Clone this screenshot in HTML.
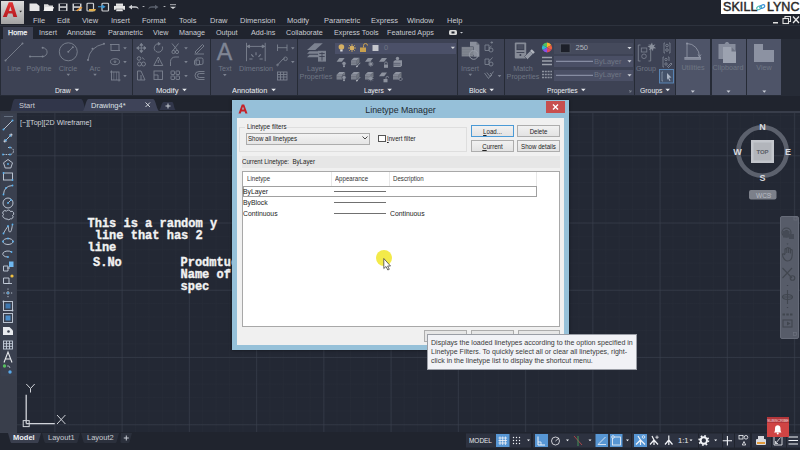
<!DOCTYPE html>
<html><head><meta charset="utf-8">
<style>
*{margin:0;padding:0;box-sizing:border-box}
html,body{width:800px;height:450px;overflow:hidden;background:#222733;font-family:"Liberation Sans",sans-serif}
.a{position:absolute}
svg{overflow:visible}
#top{left:0;top:0;width:800px;height:25px;background:#1f232d}
#tabs{left:0;top:26px;width:800px;height:13px;background:#20242e}
#ribbon{left:0;top:39px;width:800px;height:57px;background:#262b36}
.pnl{position:absolute;top:0;height:56px;background:#3d4254}
.pl{position:absolute;top:46.5px;font-size:7.5px;line-height:9px;color:#eceef2;white-space:nowrap}
.il{position:absolute;font-size:7.2px;line-height:8px;color:#6f7684;white-space:nowrap;text-align:center}
.mi{position:absolute;top:16px;font-size:7.5px;line-height:9px;color:#c9ccd2;white-space:nowrap}
.ti{position:absolute;font-size:7.2px;line-height:9px;color:#c9ccd2;white-space:nowrap}
#ftabs{left:0;top:96px;width:800px;height:17px;background:#20242e}
#draw{left:0;top:113px;width:800px;height:319px;background:#232834;overflow:hidden}
#status{left:0;top:432px;width:800px;height:18px;background:#232834}
</style></head><body>
<!-- TOP BAR -->
<div class="a" id="top">
  <div class="a" style="left:1px;top:1px;width:23px;height:22.5px;background:linear-gradient(#dcdcdc,#b9b9b9 60%,#a3a3a3)"></div>
  <svg class="a" style="left:0;top:0" width="25" height="24" viewBox="0 0 25 24">
    <defs><linearGradient id="lg" x1="0" y1="0" x2="0" y2="1"><stop offset="0" stop-color="#e03434"/><stop offset="1" stop-color="#b81c22"/></linearGradient></defs>
    <path d="M2.8 17 L8.8 2.3 L12.6 2.3 L17.2 17 L13.4 17 L12.4 13.6 L8.1 13.6 L6.8 17 Z M8.9 11 L11.7 11 L10.4 6.6 Z" fill="url(#lg)"/>
    <path d="M19.3 10.8 H22 L20.65 12.4 Z" fill="#2a2a2a"/>
  </svg>
  <!-- QAT icons -->
  <svg class="a" style="left:28px;top:1px" width="150" height="13" viewBox="0 0 150 13"><g transform="translate(0 1) scale(1 0.78)">
    <path d="M1.5 2 H8.5 L11.5 5 V11.5 H1.5 Z" fill="#e6e6e6"/>
    <path d="M16 3 H20 L21 4.5 H25 V11.5 H16 Z" fill="#d9d9d9"/><path d="M17 6.5 H26 L24.5 11.5 H15.5 Z" fill="#f0f0f0"/>
    <rect x="30.5" y="2" width="9" height="9.5" fill="#cfd1d4"/><rect x="32" y="2.5" width="6" height="3" fill="#1f232d"/><rect x="32" y="7.5" width="6" height="3.5" fill="#1f232d"/>
    <rect x="44.5" y="2" width="9" height="9.5" fill="#cfd1d4"/><rect x="46" y="2.5" width="6" height="3" fill="#1f232d"/><rect x="46" y="7.5" width="5" height="3.5" fill="#1f232d"/><path d="M48 11 L53 6 L54.5 7.5 L49.5 12 Z" fill="#e89a3c"/>
    <rect x="59" y="1.5" width="6.5" height="10" rx="1" fill="none" stroke="#cfd1d4" stroke-width="1.2"/><path d="M61 9 H68 L67 12 H61 Z" fill="#e0b050"/>
    <rect x="74" y="1.5" width="6.5" height="10" rx="1" fill="none" stroke="#cfd1d4" stroke-width="1.2"/><path d="M70 6 H76 M74 4 L76.5 6 L74 8" stroke="#3a9ad9" stroke-width="1.4" fill="none"/>
    <rect x="86" y="5" width="11" height="5" fill="#e6e6e6"/><rect x="88" y="2" width="7" height="3" fill="#e6e6e6"/><rect x="88" y="9" width="7" height="3" fill="#e6e6e6" stroke="#1f232d" stroke-width="0.5"/>
    <path d="M100.5 6.5 L104 3.5 V5.5 H107 C109.5 5.5 110.5 7 110.5 9.5 C109.5 8 108.5 7.5 107 7.5 H104 V9.5 Z" fill="#cfd1d4"/>
    <path d="M114 5 L117 5 L115.5 6.5 Z" fill="#cfd1d4"/>
    <path d="M130.5 6.5 L127 3.5 V5.5 H124 C121.5 5.5 120.5 7 120.5 9.5 C121.5 8 122.5 7.5 124 7.5 H127 V9.5 Z" fill="#5a606c"/>
    <path d="M135 5 L138 5 L136.5 6.5 Z" fill="#cfd1d4"/>
    <rect x="142" y="3" width="6" height="1" fill="#cfd1d4"/><path d="M142 6 L148 6 L145 9 Z" fill="#cfd1d4"/>
  </g></svg>
  <div class="mi" style="left:33px">File</div>
  <div class="mi" style="left:57px">Edit</div>
  <div class="mi" style="left:82px">View</div>
  <div class="mi" style="left:111px">Insert</div>
  <div class="mi" style="left:142px">Format</div>
  <div class="mi" style="left:179px">Tools</div>
  <div class="mi" style="left:210px">Draw</div>
  <div class="mi" style="left:240px">Dimension</div>
  <div class="mi" style="left:287px">Modify</div>
  <div class="mi" style="left:324px">Parametric</div>
  <div class="mi" style="left:371px">Express</div>
  <div class="mi" style="left:407px">Window</div>
  <div class="mi" style="left:447px">Help</div>
  <!-- watermark -->
  <div class="a" style="left:721px;top:0;width:79px;height:14px;background:#fff"></div>
  <div class="a" style="left:723px;top:0px;font-size:12.5px;line-height:14px;color:#2a2a2a;letter-spacing:0.1px;-webkit-text-stroke:0.45px #2a2a2a">SKILL</div>
  <svg class="a" style="left:755px;top:3px" width="12" height="8" viewBox="0 0 12 8"><ellipse cx="4.2" cy="4.8" rx="2.6" ry="1.6" fill="none" stroke="#4ec0b0" stroke-width="1.1" transform="rotate(-25 4.2 4.8)"/><ellipse cx="7.3" cy="3.6" rx="2.6" ry="1.6" fill="none" stroke="#3a8fd8" stroke-width="1.1" transform="rotate(-25 7.3 3.6)"/></svg>
  <div class="a" style="left:767px;top:0px;font-size:12.5px;line-height:14px;color:#2a2a2a;-webkit-text-stroke:0.45px #2a2a2a">LYNC</div>
  <!-- window controls -->
  <svg class="a" style="left:771px;top:15px" width="29" height="10" viewBox="0 0 29 10">
    <rect x="2" y="7" width="5" height="1.5" fill="#e0e0e0"/>
    <rect x="12" y="3.5" width="5.5" height="5" fill="none" stroke="#e0e0e0" stroke-width="1.1"/><path d="M14 3.5 V1.5 H19.5 V6.5 H17.5" fill="none" stroke="#e0e0e0" stroke-width="1.1"/>
    <path d="M22 1.5 L28 8 M28 1.5 L22 8" stroke="#e8e8e8" stroke-width="1.3"/>
  </svg>
</div>
<div class="a" style="left:0;top:25px;width:800px;height:1px;background:#2d323d"></div>
<!-- RIBBON TABS -->
<div class="a" id="tabs">
  <div class="a" style="left:3px;top:1px;width:30px;height:12px;background:#3d4254"></div>
  <div class="ti" style="left:8px;top:2px;color:#f0f2f5;-webkit-text-stroke:0.25px #f0f2f5">Home</div>
  <div class="ti" style="left:39px;top:2px">Insert</div>
  <div class="ti" style="left:67px;top:2px">Annotate</div>
  <div class="ti" style="left:108px;top:2px">Parametric</div>
  <div class="ti" style="left:153px;top:2px">View</div>
  <div class="ti" style="left:179px;top:2px">Manage</div>
  <div class="ti" style="left:216px;top:2px">Output</div>
  <div class="ti" style="left:251px;top:2px">Add-ins</div>
  <div class="ti" style="left:286px;top:2px">Collaborate</div>
  <div class="ti" style="left:334px;top:2px">Express Tools</div>
  <div class="ti" style="left:387px;top:2px">Featured Apps</div>
  <svg class="a" style="left:449px;top:4px" width="16" height="6" viewBox="0 0 16 6"><rect x="0" y="0" width="8" height="5" rx="1.5" fill="#d8d8d8"/><rect x="2.5" y="1.5" width="3" height="2" fill="#1f232d"/><path d="M11 2 L14 2 L12.5 3.5 Z" fill="#c9ccd2"/></svg>
</div>
<!-- RIBBON -->
<div class="a" id="ribbon">
  <div class="pnl" style="left:1px;width:131px"></div>
  <div class="pnl" style="left:133px;width:77px"></div>
  <div class="pnl" style="left:211px;width:86px"></div>
  <div class="pnl" style="left:298px;width:159px"></div>
  <div class="pnl" style="left:458px;width:46px"></div>
  <div class="pnl" style="left:505px;width:129px"></div>
  <div class="pnl" style="left:635px;width:40px"></div>
  <div class="pnl" style="left:676px;width:34px;background:#4e5468"></div>
  <div class="pnl" style="left:712px;width:34px;background:#4e5468"></div>
  <div class="pnl" style="left:747px;width:34px;background:#4e5468"></div>
  <!-- dropdown boxes -->
  <div class="a" style="left:335px;top:3.5px;width:121px;height:11px;background:#4b5068"></div>
  <div class="a" style="left:553.5px;top:3.5px;width:79.5px;height:11px;background:#454a5c"></div>
  <div class="a" style="left:553.5px;top:16.5px;width:79.5px;height:11.4px;background:#4a4f65"></div>
  <div class="a" style="left:553.5px;top:30.9px;width:79.5px;height:11px;background:#4a4f65"></div>
  <svg class="a" style="left:0;top:0" width="800" height="57" viewBox="0 0 800 57">
    <g fill="none" stroke="#7c8290" stroke-width="0.9">
      <!-- Draw: line -->
      <path d="M5.5 21.5 L22.5 4.5"/>
      <!-- polyline -->
      <path d="M30 17.6 H42.6 A4.5 4.45 0 0 0 42.6 8.7"/>
      <!-- circle -->
      <circle cx="68.3" cy="12.8" r="9"/><path d="M68.3 12.8 L72.8 8.3"/>
      <!-- arc -->
      <path d="M88 21 Q89.5 8 104 4.8"/>
      <!-- small draw icons -->
      <rect x="111" y="5.5" width="8" height="6"/><path d="M110 5.5 H111 M119 11.5 H120"/>
      <ellipse cx="115" cy="22.7" rx="4.5" ry="3"/><circle cx="115" cy="22.7" r="0.9"/>
      <rect x="111.5" y="33" width="7.5" height="8"/><path d="M110 33 H111.5 M119 41 H120.5 M111.5 31.5 V33 M119 41 V42.5" /><path d="M113.8 33 V41 M116.5 33 V41" stroke-width="0.5"/>
      <!-- modify icons -->
      <path d="M141.3 5.5 V12.5 M137.8 9 H144.8"/><path d="M139.8 6.3 L141.3 4.3 L142.8 6.3 Z M139.8 11.7 L141.3 13.7 L142.8 11.7 Z M138.6 7.5 L136.6 9 L138.6 10.5 Z M144 7.5 L146 9 L144 10.5 Z" fill="#7c8290"/>
      <path d="M158.3 4.8 A4.2 4.2 0 1 0 162.3 7.5"/><path d="M158.3 3.5 L160.3 4.8 L158.3 6.1 Z" fill="#7c8290"/>
      <path d="M172 4.5 L178 12 M178.5 4.5 L172.5 12"/><circle cx="173.5" cy="13" r="1.6"/><circle cx="177" cy="13" r="1.6"/>
      <path d="M195 13 L202.5 5.5 L204 7 L196.5 14.5 Z M194.5 15 H204"/>
      <circle cx="139" cy="19.5" r="1.8"/><circle cx="139.5" cy="25" r="2"/><circle cx="143.5" cy="25" r="2"/><path d="M142 18.5 L144.5 20.5"/>
      <path d="M158.3 18 L153.8 26.5 H162.8 Z M158.3 21 V24"/>
      <path d="M170.5 27 V22.5 A4.5 4.5 0 0 1 175 18 H179"/>
      <rect x="196" y="19" width="7" height="6.5" rx="1.5"/><rect x="194.5" y="21" width="5" height="5" rx="1"/>
      <path d="M137.5 32 V41 H145 L141 32 Z M141 36 V41"/>
      <rect x="154" y="32" width="8.5" height="8.5"/><path d="M154 36 H158 V40.5"/>
      <rect x="171" y="32" width="3.5" height="3.5" rx="0.5"/><rect x="176" y="32" width="3.5" height="3.5" rx="0.5"/><rect x="171" y="37" width="3.5" height="3.5" rx="0.5"/><rect x="176" y="37" width="3.5" height="3.5" rx="0.5"/>
      <path d="M204.5 32.5 H199 A4 4 0 0 0 199 40.5 H204.5 M204.5 34.5 H199.5 A2 2 0 0 0 199.5 38.5 H204.5"/>
      <!-- annotation -->
      
      <path d="M246.5 3.8 V22.2 M265.2 3.8 V22.2 M247 7.4 H264.7"/><path d="M247 7.4 L249.5 6 V8.8 Z M264.7 7.4 L262.2 6 V8.8 Z" fill="#7c8290"/>
      <path d="M251.3 15.3 L253.5 17.8 M256 13.2 V16.2 M260.7 15.3 L258.5 17.8 M249.3 20 H252.5 M259.5 20 H262.7" stroke-width="1.1"/>
      <path d="M277.5 5.5 V12 M287 5.5 V12 M277.5 8.7 H287"/>
      <path d="M277.5 26 L283 20 M283 20 L284.5 19.5" /><circle cx="285.5" cy="19.8" r="1.8"/><circle cx="277.5" cy="26" r="0.8"/>
      <rect x="277.5" y="33" width="9.5" height="8"/><path d="M277.5 35.5 H287 M277.5 38 H287 M280.5 33 V41 M283.7 33 V41"/>
      <!-- block small -->
      <path d="M485 6 H489 V11.5 H485 Z M489 9 L491.5 7" /><circle cx="491" cy="11" r="2"/><path d="M490.5 3.5 H493 M491.8 2.3 V4.7"/>
      <path d="M485 20 H489 V25.5 H485 Z"/><circle cx="491" cy="25" r="2"/><path d="M488.5 23 L492.5 18.5"/>
      <path d="M484.5 34 L488.5 39.5 L493.5 32.5 M486.8 33.5 L490 37.5 M490 34 L492 36 L490 38"/>
      <!-- groups small -->
      <path d="M665 4 H664 V14 H665 M669 4 H670 V14 H669"/><circle cx="667" cy="6.5" r="1.3"/><circle cx="667" cy="11" r="1.3"/>
      <path d="M664 18 H663 V28 H664 M668 18 H669 V22"/><circle cx="666" cy="20.5" r="1.2"/><circle cx="666" cy="25" r="1.2"/><path d="M667 28 L671 24 L672 25 L668 29"/>
      <!-- utilities -->
      <path d="M687 4.5 V18 M687 4.5 A12.5 13.5 0 0 1 699.5 18" stroke="#8e94a4" stroke-width="0.9"/>
      <circle cx="687" cy="4.5" r="1" fill="#8e94a4" stroke="none"/><path d="M698 15.5 L699.5 18 L701 15.5" stroke="#8e94a4" stroke-width="0.8"/>
      <rect x="684.4" y="18" width="16.6" height="2.8" fill="#8e94a4" stroke="none"/><path d="M685.5 19.4 H700" stroke="#6e7484" stroke-width="0.6" stroke-dasharray="1 1"/>
    </g>
    <g fill="#7c8290">
      <circle cx="5.5" cy="21.5" r="1"/><circle cx="22.5" cy="4.5" r="1"/>
      <circle cx="30" cy="17.6" r="1"/><circle cx="42.6" cy="17.6" r="1"/><circle cx="42.6" cy="8.7" r="1"/>
      <circle cx="68.3" cy="12.8" r="1"/><circle cx="72.8" cy="8.3" r="1"/>
      <circle cx="88" cy="21" r="1"/><circle cx="92.5" cy="9.8" r="1"/><circle cx="104" cy="4.8" r="1"/>
      <!-- dropdown arrows -->
      <path d="M123.20 8.20 H126.80 L125.00 10.50 Z M123.20 21.90 H126.80 L125.00 24.20 Z M123.20 36.00 H126.80 L125.00 38.30 Z"/>
      <path d="M66.50 34.70 H70.10 L68.30 37.00 Z M93.20 34.70 H96.80 L95.00 37.00 Z"/>
      <path d="M184.20 8.20 H187.80 L186.00 10.50 Z M184.20 21.90 H187.80 L186.00 24.20 Z M184.20 36.00 H187.80 L186.00 38.30 Z"/>
      <path d="M223.00 34.90 H226.60 L224.80 37.20 Z"/>
      <path d="M291.00 8.20 H294.60 L292.80 10.50 Z M291.00 21.90 H294.60 L292.80 24.20 Z"/>
      <path d="M468.50 34.70 H472.10 L470.30 37.00 Z M497.70 36.00 H501.30 L499.50 38.30 Z"/>
      <!-- layer props icon -->
      <path d="M307 11 L314.5 4.3 H322.8 L315.3 11 Z"/>
      <path d="M307 14.8 L309.5 12.3 H320 L318 14.8 Z"/>
      <path d="M307 18.3 L309.5 15.8 H318 V18.3 Z"/>
      <rect x="318" y="11.8" width="8" height="10.8"/><path d="M319.3 14.5 H324.7 M319.3 17.5 H324.7 M322 13.3 V21.5" stroke="#3d4254" stroke-width="0.9"/>
      <!-- layer small icons -->
      <g fill="#8d929e"><path d="M336.6 22.8 L339.40000000000003 19 H344.6 L341.8 22.8 Z"/><circle cx="344" cy="24.5" r="2.1" fill="#8d929e" stroke="#3d4254" stroke-width="0.6"/><rect x="343" y="26.3" width="2" height="1.8" fill="#8d929e"/><path d="M351 21.5 L353.8 18.7 H359.5 L356.7 21.5 Z" fill="#9196a2"/><rect x="351" y="21.5" width="5.7" height="4.7" fill="#858a96"/><path d="M356.7 21.5 L359.5 18.7 V23.4 L356.7 26.2 Z" fill="#70757f"/><path d="M351 23.1 H356.7 M351 24.7 H356.7" stroke="#5c616c" stroke-width="0.5"/><path d="M356.8 27.6 L360.3 23.8" stroke="#8d929e" stroke-width="1"/><path d="M356.3 28.1 L357.6 26.8" stroke="#b0b4bc" stroke-width="1.4"/><path d="M365 22.8 L367.8 19 H373 L370.2 22.8 Z"/><circle cx="370.8" cy="25" r="1.6" fill="#8d929e"/><path d="M370.8 22.2 V27.8 M368.0 25 H373.6 M368.8 23 L372.8 27 M372.8 23 L368.8 27" stroke="#8d929e" stroke-width="0.7"/><path d="M379 22.8 L381.8 19 H387 L384.2 22.8 Z"/><rect x="384" y="25.5" width="4" height="3.3" fill="#8d929e"/><path d="M384.7 25.5 V24.2 A1.3 1.3 0 0 1 387.3 24.2 V25.5" fill="none" stroke="#8d929e" stroke-width="0.8"/><circle cx="397.5" cy="19.5" r="1.7"/><path d="M393.5 22.5 L395 21.3 H402 V26.8 L400.5 28 H393.5 Z" fill="#8d929e"/><path d="M393.5 24.3 H400.5 M393.5 26.1 H400.5" stroke="#3d4254" stroke-width="0.6"/><path d="M336.6 35.8 L339.40000000000003 33 H345.1 L342.3 35.8 Z" fill="#9196a2"/><rect x="336.6" y="35.8" width="5.7" height="4.7" fill="#858a96"/><path d="M342.3 35.8 L345.1 33 V37.7 L342.3 40.5 Z" fill="#70757f"/><path d="M336.6 37.4 H342.3 M336.6 39 H342.3" stroke="#5c616c" stroke-width="0.5"/><circle cx="344" cy="38.5" r="2.1" fill="#8d929e" stroke="#3d4254" stroke-width="0.6"/><rect x="343" y="40.3" width="2" height="1.8" fill="#8d929e"/><path d="M351 35.8 L353.8 33 H359.5 L356.7 35.8 Z" fill="#9196a2"/><rect x="351" y="35.8" width="5.7" height="4.7" fill="#858a96"/><path d="M356.7 35.8 L359.5 33 V37.7 L356.7 40.5 Z" fill="#70757f"/><path d="M351 37.4 H356.7 M351 39 H356.7" stroke="#5c616c" stroke-width="0.5"/><path d="M356.8 41.8 L360.3 38.0" stroke="#8d929e" stroke-width="1"/><path d="M356.3 42.3 L357.6 41.0" stroke="#b0b4bc" stroke-width="1.4"/><path d="M365 35.8 L367.8 33 H373.5 L370.7 35.8 Z" fill="#9196a2"/><rect x="365" y="35.8" width="5.7" height="4.7" fill="#858a96"/><path d="M370.7 35.8 L373.5 33 V37.7 L370.7 40.5 Z" fill="#70757f"/><path d="M365 37.4 H370.7 M365 39 H370.7" stroke="#5c616c" stroke-width="0.5"/><circle cx="370.8" cy="39.5" r="1.6" fill="#8d929e"/><path d="M370.8 36.7 V42.3 M368.0 39.5 H373.6 M368.8 37.5 L372.8 41.5 M372.8 37.5 L368.8 41.5" stroke="#8d929e" stroke-width="0.7"/><path d="M379 37.3 L381.8 33.5 H387 L384.2 37.3 Z"/><rect x="383.5" y="40.0" width="4" height="3.3" fill="#8d929e"/><path d="M386.0 40.0 V38.7 A1.3 1.3 0 0 1 388.6 38.7" fill="none" stroke="#8d929e" stroke-width="0.8"/><path d="M393 35.8 L395.8 33 H401.5 L398.7 35.8 Z" fill="#9196a2"/><rect x="393" y="35.8" width="5.7" height="4.7" fill="#858a96"/><path d="M398.7 35.8 L401.5 33 V37.7 L398.7 40.5 Z" fill="#70757f"/><path d="M393 37.4 H398.7 M393 39 H398.7" stroke="#5c616c" stroke-width="0.5"/><path d="M398.5 40 L400.5 38 L402.5 40 L400.5 42 Z" fill="none" stroke="#8d929e" stroke-width="0.8"/></g>
      <!-- layer dropdown content -->
      <circle cx="341.4" cy="8" r="2.8" fill="#d5b063"/><rect x="340.2" y="10.5" width="2.4" height="2" fill="#d8d8d8"/>
      <circle cx="352" cy="9" r="2.2" fill="#d5b063"/><path d="M352 5 V13 M348 9 H356 M349.2 6.2 L354.8 11.8 M354.8 6.2 L349.2 11.8" stroke="#d5b063" stroke-width="0.8"/>
      <rect x="360" y="8.5" width="6" height="4.5" fill="#c9a04e"/><path d="M363.5 8.5 V6.5 A2 2 0 0 1 367.5 6.5" fill="none" stroke="#c9a04e" stroke-width="1"/>
      <rect x="372.5" y="6" width="6" height="6" fill="#c4c6cc"/>
      <path d="M450.8 7.8 H455 L452.9 10.1 Z" fill="#d0d2d6"/>
      <!-- insert icon -->
      <path d="M470 2.8 H476.5 L479.4 5.7 V17.7 H470 Z" fill="#8a8f9b"/><path d="M476.5 2.8 V5.7 H479.4" fill="#6c717c"/>
      <rect x="461.3" y="7.8" width="12.4" height="10" fill="#80858f" stroke="#3d4254" stroke-width="0.5"/>
      <path d="M462 10.5 H473 M462 13 H473 M462 15.5 H473" stroke="#747984" stroke-width="0.5"/>
      <circle cx="473.7" cy="15.9" r="4.4" fill="none" stroke="#9a9faa" stroke-width="0.9"/><path d="M473.7 15.9 V11.5" stroke="#9a9faa" stroke-width="0.8"/>
      <!-- match properties -->
      <rect x="514.8" y="3.4" width="11.4" height="16.2" rx="1" fill="#868b97"/><rect x="516.5" y="5.3" width="7.8" height="5.8" fill="#3d4254"/><path d="M517.5 7 H523.5 M517.5 9 H523.5" stroke="#6c717c" stroke-width="0.6"/>
      <rect x="516.5" y="13" width="7.8" height="0.9" fill="#3d4254"/><circle cx="520.4" cy="16" r="1" fill="#3d4254"/>
      <path d="M524.5 17.5 L530 12 L533 15 L527.5 20.5 Z" fill="#9297a3" stroke="#3d4254" stroke-width="0.6"/><path d="M530 12 L531.8 10.2 L534.8 13.2 L533 15 Z" fill="#b0b4bd"/>
      <!-- properties -->
      <path d="M542 18.5 H552 M542 22 H552 M542 25.5 H552" stroke="#9ca1ab" stroke-width="1.6"/>
      <path d="M542 32.5 H552 M542 35.5 H552 M542 38.5 H552" stroke="#8d929e" stroke-width="1.3" stroke-dasharray="2 0.8"/>
      <rect x="560.5" y="5" width="9.5" height="8.5" fill="#1d2029" stroke="#595f6c" stroke-width="0.6"/>
      <path d="M556 22.3 H593" stroke="#868ca2" stroke-width="1.2"/><path d="M556 36.4 H593" stroke="#868ca2" stroke-width="1.2"/>
      <path d="M627.4 8 H631.6 L629.5 10.3 Z M627.4 21.2 H631.6 L629.5 23.5 Z M627.4 35.2 H631.6 L629.5 37.5 Z" fill="#d0d3da"/>
      <path d="M629 51 L631 53 M631 51 V53 H629" stroke="#8a909c" stroke-width="0.6" fill="none"/>
      <!-- group icon -->
      <path d="M640.5 6 H638.3 V22 H640.5 M648.5 6 H650.7 V22 H648.5" fill="none" stroke="#7c8290" stroke-width="0.9"/>
      <rect x="641.3" y="9" width="5.5" height="4" fill="none" stroke="#7c8290" stroke-width="0.8"/><circle cx="644" cy="17.3" r="2.3" fill="none" stroke="#7c8290" stroke-width="0.8"/>
      <path d="M652 3.5 L652.8 6.3 L655.5 5.3 L653.8 7.6 L656.2 9.3 L653.3 9.5 L653 12.3 L651.5 10 L649 11.3 L650 8.7 L647.5 7.5 L650.3 6.5 Z" fill="#8a909c"/>
      <rect x="659.5" y="30.5" width="14" height="13.5" fill="#44526a" stroke="#5b8bbd" stroke-width="0.9"/>
      <path d="M663 33 H662 V42 H663" fill="none" stroke="#9aa6b8" stroke-width="0.7"/><path d="M667 34 L671.5 38.5 L669 38.7 L670.5 41.5 L669.5 42 L668 39.3 L667 41 Z" fill="#aab4c4"/>
      <!-- clipboard -->
      <path d="M718.5 5 H724.5 L726 3 H728 L729.5 5 H735.5 V20 H718.5 Z" fill="#868c9c"/>
      <path d="M723 8 H731.5 L736 12.5 V24 H723 Z" fill="#9ca2b0"/><path d="M731.5 8 V12.5 H736" fill="#6e7484"/>
      <!-- view -->
      <path d="M754 5 H763 V11 H774 V23 H754 Z" fill="#8c92a2"/>
      <!-- panel dropdown arrows small -->
      <path d="M690.8 51.5 H694.8 L692.8 53.7 Z M726.5 51.5 H730.5 L728.5 53.7 Z M762.3 51.5 H766.3 L764.3 53.7 Z" fill="#c8ccd4"/>
    </g>
    <!-- color wheel -->
    <g transform="translate(547 8.5)">
      <path d="M0 0 L0 -5 A5 5 0 0 1 4.33 -2.5 Z" fill="#f8b030"/>
      <path d="M0 0 L4.33 -2.5 A5 5 0 0 1 4.33 2.5 Z" fill="#f06040"/>
      <path d="M0 0 L4.33 2.5 A5 5 0 0 1 0 5 Z" fill="#d84860"/>
      <path d="M0 0 L0 5 A5 5 0 0 1 -4.33 2.5 Z" fill="#8a50e8"/>
      <path d="M0 0 L-4.33 2.5 A5 5 0 0 1 -4.33 -2.5 Z" fill="#30b8d0"/>
      <path d="M0 0 L-4.33 -2.5 A5 5 0 0 1 0 -5 Z" fill="#50c060"/>
    </g>
    <!-- panel title arrows -->
    <g fill="#e8eaee">
      <path d="M74.6 49.8 H79.2 L76.9 52.3 Z"/><path d="M182.2 49.8 H186.8 L184.5 52.3 Z"/><path d="M271.3 49.8 H275.9 L273.6 52.3 Z"/>
      <path d="M387.3 49.8 H391.9 L389.6 52.3 Z"/><path d="M489.4 49.8 H494 L491.7 52.3 Z"/><path d="M581 49.8 H585.6 L583.3 52.3 Z"/><path d="M665.4 49.8 H670 L667.7 52.3 Z"/>
    </g>
  </svg>
  <!-- labels -->
  <div class="a" style="left:216.8px;top:-0.3px;font-size:23.3px;line-height:26px;color:#7f8594;-webkit-text-stroke:0.35px #7f8594">A</div>
  <div class="il" style="left:1px;top:25.6px;width:26px">Line</div>
  <div class="il" style="left:24px;top:25.6px;width:30px">Polyline</div>
  <div class="il" style="left:55px;top:25.6px;width:26px">Circle</div>
  <div class="il" style="left:82px;top:25.6px;width:26px">Arc</div>
  <div class="il" style="left:212px;top:25.6px;width:26px">Text</div>
  <div class="il" style="left:236px;top:25.6px;width:40px">Dimension</div>
  <div class="il" style="left:296px;top:25.6px;width:40px">Layer</div>
  <div class="il" style="left:296px;top:34.1px;width:40px">Properties</div>
  <div class="il" style="left:455px;top:25.6px;width:30px">Insert</div>
  <div class="il" style="left:503px;top:25.6px;width:40px">Match</div>
  <div class="il" style="left:503px;top:34.1px;width:40px">Properties</div>
  <div class="il" style="left:626px;top:25.6px;width:40px">Group</div>
  <div class="il" style="left:673px;top:24.5px;width:40px">Utilities</div>
  <div class="il" style="left:708px;top:24.5px;width:40px">Clipboard</div>
  <div class="il" style="left:744px;top:24.5px;width:40px">View</div>
  <div class="a" style="left:384px;top:5px;font-size:7.5px;line-height:8px;color:#6f7684">0</div>
  <div class="a" style="left:575.5px;top:5px;font-size:7.5px;line-height:8px;color:#b0b4bc">250</div>
  <div class="a" style="left:594px;top:18.5px;font-size:7.5px;line-height:8px;color:#6f7684">ByLayer</div>
  <div class="a" style="left:594px;top:32px;font-size:7.5px;line-height:8px;color:#6f7684">ByLayer</div>
  <div class="pl" style="left:55.0px;transform:scaleX(0.896);transform-origin:0 0">Draw</div>
  <div class="pl" style="left:156.2px;transform:scaleX(1.018);transform-origin:0 0">Modify</div>
  <div class="pl" style="left:232.3px;transform:scaleX(0.984);transform-origin:0 0">Annotation</div>
  <div class="pl" style="left:364.0px;transform:scaleX(0.875);transform-origin:0 0">Layers</div>
  <div class="pl" style="left:468.7px;transform:scaleX(0.943);transform-origin:0 0">Block</div>
  <div class="pl" style="left:546.7px;transform:scaleX(0.895);transform-origin:0 0">Properties</div>
  <div class="pl" style="left:639.6px;transform:scaleX(0.910);transform-origin:0 0">Groups</div>
</div>
<!-- FILE TABS -->
<div class="a" id="ftabs">
  <svg class="a" style="left:0;top:0" width="800" height="17" viewBox="0 0 800 17">
    <path d="M9.5 15.5 C12 15.5 12 3 15 3 H81 C84 3 84.5 15.5 87 15.5 Z" fill="#31364a"/>
    <path d="M82 15.5 C85 15.5 85.5 3 88.5 3 H153 C156 3 156.5 15.5 160 15.5 Z" fill="#3e4358"/>
    <path d="M159 14 C161 14 161 6 164 6 H172 C174 6 174 14 176 14 Z" fill="#31364a"/>
    <path d="M168 7.5 V12.5 M165.5 10 H170.5" stroke="#c8ccd4" stroke-width="1"/>
    <path d="M145.5 6.5 L150 11 M150 6.5 L145.5 11" stroke="#d0d4da" stroke-width="1"/>
    <rect x="0" y="15" width="800" height="2" fill="#383d4a"/>
  </svg>
  <div class="a" style="left:19px;top:5px;font-size:7.5px;line-height:9px;color:#c9ccd2">Start</div>
  <div class="a" style="left:91px;top:5px;font-size:7.5px;line-height:9px;color:#dde0e5">Drawing4*</div>
</div>
<!-- DRAWING AREA -->
<div class="a" id="draw">
  <div class="a" style="left:0;top:0;width:800px;height:319px;
    background-image:
      linear-gradient(to right, rgba(58,64,78,0.6) 1px, transparent 1px),
      linear-gradient(to bottom, rgba(58,64,78,0.6) 1px, transparent 1px),
      linear-gradient(to right, rgba(42,47,58,0.4) 1px, transparent 1px),
      linear-gradient(to bottom, rgba(42,47,58,0.4) 1px, transparent 1px);
    background-size:67.25px 67.25px,67.25px 67.25px,13.45px 13.45px,13.45px 13.45px;
    background-position:54.4px 0,0 42.3px,0.6px 0,0 1.9px"></div>
  <!-- left toolbar -->
  <div class="a" style="left:0;top:0;width:17px;height:319px;background:#393e4b"></div>
  <div class="a" style="left:1px;top:1px;width:14.5px;height:262px;background:#3a404f"></div>
  <div class="a" style="left:4px;top:2.5px;width:9px;height:1.2px;background:#667080"></div>
  <svg class="a" style="left:0;top:0" width="17" height="264" viewBox="0 0 17 264">
    <g fill="none" stroke="#c6cfdc" stroke-width="0.9">
      <g transform="translate(8 12)"><path d="M-4.5 4.5 L4.5 -4.5"/></g>
      <g transform="translate(8 25)"><path d="M-4 4 L4 -4 M-4 4 L-1.5 3.5 M-4 4 L-3.5 1.5 M4 -4 L1.5 -3.5 M4 -4 L3.5 -1.5"/></g>
      <g transform="translate(8 38)"><path d="M-5 3.5 H2 A3.5 3.5 0 0 0 2 -3.5 H0" stroke-dasharray="1.6 1"/></g>
      <g transform="translate(8 51)"><path d="M0 -4.5 L4.5 -1.2 L2.8 4 H-2.8 L-4.5 -1.2 Z"/></g>
      <g transform="translate(8 63.5)"><rect x="-4.5" y="-3.5" width="9" height="7"/></g>
      <g transform="translate(8 77)"><path d="M-4.5 4.5 Q-4 -4 4.5 -4.5"/></g>
      <g transform="translate(8 90)"><circle r="5"/><path d="M0 0 L3 -3"/></g>
      <g transform="translate(8 102)"><path d="M-3.5 3 A2 2 0 0 1 -4.5 -0.5 A2.2 2.2 0 0 1 -1.5 -3.8 A2.2 2.2 0 0 1 2.5 -3.5 A2.2 2.2 0 0 1 4.5 0.5 A2 2 0 0 1 2.5 3.8 A2.5 2.5 0 0 1 -1 4 A2 2 0 0 1 -3.5 3 Z"/></g>
      <g transform="translate(8 116)"><path d="M-4.5 4.5 C-3 1 -1 -1 0 -3 C1 -1 0 3 2 3 C3.5 3 4 -2 4.5 -4.5"/></g>
      <g transform="translate(8 128.5)"><ellipse rx="5" ry="3"/></g>
      <g transform="translate(8 141)"><path d="M3.5 -2 A5 3 0 1 0 0 3"/></g>
      <g transform="translate(8 154)"><path d="M-4.5 -1 H0 V4 H-4.5 Z M-1 1 H2"/></g>
      <g transform="translate(8 167)"><path d="M-4.5 -2 H1 V3.5 H-4.5 Z M-3 3.5 H4"/></g>
      <g transform="translate(8 180)" stroke-dasharray="1.2 1.3"><path d="M0 -4.5 V4.5 M-4.5 0 H4.5"/></g>
      <g transform="translate(8 193)"><rect x="-4.5" y="-4.5" width="9" height="9"/></g>
      <g transform="translate(8 205)"><rect x="-4.5" y="-4.5" width="9" height="9"/></g>
      <g transform="translate(8 232)"><rect x="-4.5" y="-4" width="9" height="8"/><path d="M-4.5 -1.3 H4.5 M-4.5 1.3 H4.5 M-1.5 -4 V4 M1.5 -4 V4"/></g>
    </g>
    <g fill="#58b0ee">
      <circle cx="3.5" cy="16.5" r="1"/><circle cx="12.5" cy="7.5" r="1"/>
      <circle cx="6" cy="27" r="0.9"/><circle cx="10" cy="23" r="0.9"/>
      <circle cx="3" cy="41.5" r="0.9"/><circle cx="10" cy="41.5" r="0.9"/><circle cx="10" cy="34.5" r="0.9"/>
      <circle cx="8" cy="51" r="0.9"/>
      <circle cx="3.5" cy="60" r="0.9"/><circle cx="12.5" cy="67" r="0.9"/>
      <circle cx="3.5" cy="81.5" r="0.9"/><circle cx="6" cy="75" r="0.9"/><circle cx="12.5" cy="72.5" r="0.9"/>
      <circle cx="8" cy="90" r="0.9"/><circle cx="11" cy="87" r="0.9"/>
      <circle cx="3.5" cy="120.5" r="0.9"/><circle cx="8" cy="113" r="0.9"/><circle cx="12.5" cy="111.5" r="0.9"/>
      <circle cx="3" cy="128.5" r="0.9"/><circle cx="13" cy="128.5" r="0.9"/><circle cx="8" cy="125.5" r="0.9"/>
      <circle cx="8" cy="144" r="0.9"/><circle cx="11.5" cy="139" r="0.9"/>
      <rect x="9" y="148.5" width="4.5" height="5.5" fill="#6fb8f0"/>
      <circle cx="12" cy="163" r="1.6" fill="#f0c040"/>
      <circle cx="8" cy="180" r="0.9"/>
      <rect x="5.5" y="190.5" width="5" height="5" fill="#3f78b0"/><rect x="5.5" y="202.5" width="5" height="5" fill="#4a8cc8"/>
      <circle cx="3.5" cy="188.5" r="0.9" fill="#c6cfdc"/><circle cx="12.5" cy="197.5" r="0.9" fill="#c6cfdc"/>
      <path d="M3 214 H9.5 L13 217.5 V222 H3 Z" fill="#e8eaee"/><circle cx="8.5" cy="218.5" r="1.3" fill="#3a404f"/>
      <circle cx="4.5" cy="253" r="1.7" fill="#58c060"/><circle cx="10" cy="259" r="1.7" fill="#58a8e8"/>
    </g>
    <path d="M4 249.5 L8 239 L12 249.5 M5.4 246 H10.6" stroke="#e8eaee" stroke-width="1.1" fill="none"/>
    <path d="M7 253 Q9.5 252 10 255" stroke="#c6cfdc" stroke-width="0.7" fill="none"/>
  </svg>
  <div class="a" style="left:19.5px;top:4.5px;font-size:7.5px;line-height:9px;color:#d2d5db;transform:scaleX(0.95);transform-origin:0 0">[−][Top][2D Wireframe]</div>
  <!-- drawing text -->
  <div class="a" style="left:87.5px;top:105px;font-family:'Liberation Mono',monospace;font-weight:bold;font-size:12px;line-height:12px;color:#f2f2f2;white-space:pre;-webkit-text-stroke:0.35px #f2f2f2">This is a random y
 line that has 2
line</div>
  <div class="a" style="left:93px;top:143.5px;font-family:'Liberation Mono',monospace;font-weight:bold;font-size:12px;line-height:12px;color:#f2f2f2;white-space:pre;-webkit-text-stroke:0.35px #f2f2f2">S.No</div>
  <div class="a" style="left:180.5px;top:143.5px;font-family:'Liberation Mono',monospace;font-weight:bold;font-size:12px;line-height:12px;color:#f2f2f2;white-space:pre;-webkit-text-stroke:0.35px #f2f2f2">Prodmtuc
Name of
spec</div>
  <!-- UCS icon -->
  <svg class="a" style="left:18px;top:265px" width="60" height="50" viewBox="0 0 60 50">
    <path d="M8.2 16.7 V45.6 M8.2 45.6 H36.8" stroke="#d0d3d9" stroke-width="1.3" fill="none"/>
    <rect x="5.2" y="42.6" width="6" height="6" fill="none" stroke="#d0d3d9" stroke-width="1"/>
    <path d="M8.3 6 L12.5 10.5 L16.7 6 M12.5 10.5 V14.5" stroke="#d0d3d9" stroke-width="1" fill="none"/>
    <path d="M39 37 L47.4 46 M47.4 37 L39 46" stroke="#d0d3d9" stroke-width="1" fill="none"/>
  </svg>
  <!-- viewcube -->
  <svg class="a" style="left:730px;top:8px" width="66" height="82" viewBox="730 121 66 82">
    <circle cx="762.5" cy="151.5" r="24.2" fill="none" stroke="#5c616d" stroke-width="4.6"/>
    <rect x="751" y="140" width="23" height="23" fill="#c3c6cc"/>
    <rect x="753.5" y="142.5" width="18" height="18" fill="#b2b5bb"/>
    <text x="762.5" y="153.8" font-family="Liberation Sans" font-size="6" font-weight="bold" fill="#5a5e66" text-anchor="middle">TOP</text>
    <g font-family="Liberation Sans" font-size="9" font-weight="bold" fill="#d8dadf" text-anchor="middle">
      <text x="762.5" y="130">N</text><text x="762.5" y="181">S</text><text x="737.5" y="155">W</text><text x="788" y="155">E</text>
    </g>
    <rect x="749" y="190" width="27.5" height="9.5" rx="2" fill="#7c808a"/>
    <text x="756" y="197.7" font-family="Liberation Sans" font-size="6.5" fill="#b8bcc4">WCS</text>
    <path d="M769 194 L772 194 L770.5 195.5 Z" fill="#9a9ea6"/>
  </svg>
  <!-- nav bar -->
  <div class="a" style="left:779.5px;top:102.5px;width:19.5px;height:123.5px;background:#575c69;border:1px solid #666b78;border-radius:2px"></div>
  <svg class="a" style="left:780px;top:102px" width="20" height="124" viewBox="0 0 20 124">
    <g fill="none" stroke="#41464f" stroke-width="1.1">
      <circle cx="6.5" cy="17.5" r="4.5"/><circle cx="6.5" cy="17.5" r="2"/>
      <path d="M5 39 V34.5 A0.9 0.9 0 0 1 6.8 34.5 V38 M6.8 33.5 A0.9 0.9 0 0 1 8.6 33.5 V38 M8.6 34 A0.9 0.9 0 0 1 10.4 34 V38.5 M10.4 35.5 A0.9 0.9 0 0 1 12.2 35.5 V40 Q12 46 7.5 46 Q5 46 3 42 L2.5 39 Q4 38.5 5 40"/>
      <path d="M2.5 53 L12 63 M12 53 L2.5 63"/><circle cx="12.5" cy="63" r="2.3"/>
      <path d="M7.5 75 V89 M2 82 H13"/><ellipse cx="7.5" cy="82" rx="5" ry="2.5"/>
      <rect x="3" y="105" width="9" height="7"/>
    </g>
    <rect x="3" y="16" width="6.5" height="6.5" fill="#454a55"/><rect x="9" y="19" width="5" height="5" fill="#454a55"/>
    <path d="M7 106.5 L10.5 108.5 L7 110.5 Z" fill="#41464f"/>
    <path d="M2.5 99.5 H5 M6.3 99.5 H8.8 M10 99.5 H12.5" stroke="#41464f" stroke-width="2"/>
    <path d="M6.5 28.5 H8.5 L7.5 29.7 Z M6.5 70 H8.5 L7.5 71.2 Z M6.5 92 H8.5 L7.5 93.2 Z" fill="#3d424c"/>
    <rect x="13.5" y="117.5" width="3" height="3" fill="none" stroke="#6e7380" stroke-width="0.6"/>
    <rect x="14" y="2" width="3" height="3" fill="none" stroke="#6e7380" stroke-width="0.6"/>
  </svg>
</div>
<!-- DIALOG -->
<style>
.dt{position:absolute;font-size:6.9px;line-height:9px;color:#222;white-space:pre;transform:scaleX(0.89);transform-origin:0 50%}
.dc{position:absolute;font-size:6.9px;line-height:9px;color:#222;white-space:pre;text-align:center;transform:scaleX(0.89);transform-origin:50% 50%}
.lr{position:absolute;font-size:7.2px;line-height:9px;color:#222;white-space:pre;transform:scaleX(0.95);transform-origin:0 50%}
.btn{position:absolute;width:43px;height:12px;background:linear-gradient(#f1f1f1,#e3e3e3);border:1px solid #adadad}
</style>
<div class="a" style="left:232px;top:100px;width:337px;height:249.5px;background:#96c1d9;box-shadow:0 0 3px rgba(0,0,0,0.5)"></div>
<div class="a" style="left:233px;top:101px;width:335px;height:17px;background:#96c0d9"></div>
<svg class="a" style="left:238px;top:104px" width="10" height="10" viewBox="0 0 10 10"><path d="M0.5 9.5 L3.8 0.5 L6.2 0.5 L9.5 9.5 L7.3 9.5 L6.6 7.4 L3.4 7.4 L2.7 9.5 Z M4 5.4 L6 5.4 L5 2.5 Z" fill="#c62128"/></svg>
<div class="a" style="left:232px;top:103.5px;width:337px;text-align:center;font-size:8.8px;line-height:12px;color:#1e2a33">Linetype Manager</div>
<div class="a" style="left:546px;top:101px;width:18.5px;height:11.5px;background:#c74f4f"></div>
<svg class="a" style="left:546px;top:101px" width="19" height="12" viewBox="0 0 19 12"><path d="M7 3.5 L12 8.5 M12 3.5 L7 8.5" stroke="#fff" stroke-width="1.4"/></svg>
<div class="a" style="left:237px;top:118px;width:327px;height:227px;background:#f0f0f0"></div>
<!-- group box -->
<div class="a" style="left:238.5px;top:126.5px;width:228px;height:25px;border:1px solid #dedede"></div>
<div class="a" style="left:245px;top:122.5px;width:42px;height:8px;background:#f0f0f0"></div>
<div class="dt" style="left:247px;top:122px">Linetype filters</div>
<div class="a" style="left:246px;top:132.5px;width:123.5px;height:12px;background:linear-gradient(#f3f3f3,#e5e5e5);border:1px solid #acacac"></div>
<div class="dt" style="left:248.2px;top:134px">Show all linetypes</div>
<svg class="a" style="left:362px;top:136px" width="6" height="4" viewBox="0 0 6 4"><path d="M0.5 0.5 L3 3 L5.5 0.5" stroke="#333" stroke-width="0.9" fill="none"/></svg>
<div class="a" style="left:378px;top:134.5px;width:7.5px;height:7.5px;background:#fff;border:1px solid #555"></div>
<div class="dt" style="left:387.2px;top:133.5px"><u>I</u>nvert filter</div>
<!-- buttons -->
<div class="btn" style="left:471px;top:125px;border-color:#4a9ad6"></div>
<div class="dc" style="left:471px;top:126.5px;width:43px"><u>L</u>oad...</div>
<div class="btn" style="left:516.5px;top:125px"></div>
<div class="dc" style="left:516.5px;top:126.5px;width:43px">Delete</div>
<div class="btn" style="left:471px;top:140.3px"></div>
<div class="dc" style="left:471px;top:141.8px;width:43px"><u>C</u>urrent</div>
<div class="btn" style="left:516.5px;top:140.3px"></div>
<div class="dc" style="left:516.5px;top:141.8px;width:43px">Show details</div>
<!-- current linetype -->
<div class="a" style="left:241.5px;top:155.5px;width:318px;height:12px;background:#e6e6e6"></div>
<div class="dt" style="left:242px;top:157px">Current Linetype:  ByLayer</div>
<!-- list -->
<div class="a" style="left:242px;top:170.5px;width:317.5px;height:156px;background:#fff;border:1px solid #a8a8a8"></div>
<div class="a" style="left:331px;top:171.5px;width:1px;height:14px;background:#e8e8e8"></div>
<div class="a" style="left:389px;top:171.5px;width:1px;height:14px;background:#e8e8e8"></div>
<div class="a" style="left:535.5px;top:171.5px;width:1px;height:14px;background:#e8e8e8"></div>
<div class="dt" style="left:246.6px;top:174px;color:#333">Linetype</div>
<div class="dt" style="left:334.7px;top:174px;color:#333">Appearance</div>
<div class="dt" style="left:393px;top:174px;color:#333">Description</div>
<div class="a" style="left:242.5px;top:185.5px;width:294px;height:11.5px;border:1px solid #a0a0a0"></div>
<div class="lr" style="left:242.8px;top:187px">ByLayer</div>
<div class="lr" style="left:243px;top:198px">ByBlock</div>
<div class="lr" style="left:243px;top:209px">Continuous</div>
<div class="lr" style="left:390px;top:209px">Continuous</div>
<div class="a" style="left:334px;top:191px;width:52px;height:1.3px;background:#707070"></div>
<div class="a" style="left:334px;top:202px;width:52px;height:1.3px;background:#707070"></div>
<div class="a" style="left:334px;top:213px;width:52px;height:1.3px;background:#707070"></div>
<!-- bottom buttons (hidden by tooltip) -->
<div class="a" style="left:424px;top:330px;width:43px;height:12px;background:#e6e6e6;border:1px solid #adadad"></div>
<div class="a" style="left:470.5px;top:330px;width:43px;height:12px;background:#e6e6e6;border:1px solid #adadad"></div>
<div class="a" style="left:517.5px;top:330px;width:42.5px;height:12px;background:#e6e6e6;border:1px solid #adadad"></div>
<!-- cursor -->
<div class="a" style="left:375.7px;top:250.2px;width:16px;height:16px;border-radius:50%;background:#f3ea4a"></div>
<svg class="a" style="left:383px;top:258px" width="10" height="14" viewBox="0 0 10 14"><path d="M0.8 0.5 V10.5 L3 8.5 L4.8 12 L6.3 11.3 L4.6 8 L7.5 8 Z" fill="#fff" stroke="#444" stroke-width="0.8"/></svg>
<!-- tooltip -->
<div class="a" style="left:426.5px;top:333.5px;width:210.5px;height:36px;background:#f1f2f6;border:1px solid #9a9ea6"></div>
<div class="a" style="left:431px;top:338px;font-size:7.05px;line-height:9.2px;color:#3a3a3a;white-space:pre">Displays the loaded linetypes according to the option specified in
Linetype Filters. To quickly select all or clear all linetypes, right-
click in the linetype list to display the shortcut menu.</div>
<!-- STATUS / LAYOUT TABS -->
<div class="a" style="left:0;top:432px;width:800px;height:18px;background:#20242e"></div>
<div class="a" style="left:0;top:432px;width:17px;height:0.5px;background:#3a3f4c"></div>
<svg class="a" style="left:0;top:432px" width="800" height="18" viewBox="0 0 800 18">
  <path d="M8 1 H41 L38.5 10 C38 11 37.5 11 36.5 11 H12.5 C11.5 11 11 11 10.5 10 Z" fill="#3a3f4e"/>
  <path d="M42 1 H80 L77.5 10 C77 11 76.5 11 75.5 11 H46.5 C45.5 11 45 11 44.5 10 Z" fill="#2b303c"/>
  <path d="M81 1 H119 L116.5 10 C116 11 115.5 11 114.5 11 H85.5 C84.5 11 84 11 83.5 10 Z" fill="#2b303c"/>
  <path d="M121 1 H132 L129.5 10 C129 11 128.5 11 127.5 11 H122.5 C121.5 11 121 11 120.5 10 Z" fill="#2b303c"/>
  <path d="M126.3 3.5 V8.5 M123.8 6 H128.8" stroke="#c8ccd4" stroke-width="1"/>
  <!-- status groups -->
  <rect x="466" y="1.5" width="65" height="14" fill="#2d3240"/>
  <rect x="533" y="1.5" width="98" height="14" fill="#2d3240"/>
  <rect x="632" y="1.5" width="66" height="14" fill="#2d3240"/>
  <rect x="699" y="1.5" width="23" height="14" fill="#2d3240"/>
  <rect x="723" y="1.5" width="11" height="14" fill="#2d3240"/>
  <rect x="735" y="1.5" width="15" height="14" fill="#2d3240"/>
  <rect x="752" y="1.5" width="19" height="14" fill="#2d3240"/>
  <rect x="772" y="1.5" width="14" height="14" fill="#2d3240"/>
  <rect x="787" y="1.5" width="13" height="14" fill="#2d3240"/>
  <rect x="496" y="2" width="13.5" height="13" fill="#5796d4"/>
  <rect x="535" y="2" width="13" height="13" fill="#5796d4"/>
  <rect x="595.5" y="2" width="12.5" height="13" fill="#5796d4"/>
  <rect x="610" y="2" width="12.5" height="13" fill="#5796d4"/>
  <rect x="634" y="2" width="13" height="13" fill="#5796d4"/>
  <g stroke="#f2f4f8" stroke-width="0.8" fill="none">
    <path d="M498.5 6 H507 M498.5 8.5 H507 M498.5 11 H507 M500 4.5 V13 M502.7 4.5 V13 M505.4 4.5 V13"/>
    <path d="M538 4.5 V13 H545" stroke-width="1"/><path d="M538 10 H541 V13"/>
    <circle cx="555.5" cy="9" r="4"/><path d="M555.5 9 L559 6"/>
    <path d="M574 4 L582 13" stroke="#c84a4a"/><path d="M578 4 V14" stroke="#4aa860"/>
    <path d="M598 12.5 L605.5 5 M598 12.5 H606"/>
    <rect x="612.5" y="5" width="8" height="8"/><circle cx="613" cy="5" r="1.3" fill="#5796d4"/>
    <path d="M640.5 8 V13 M640.5 8 L636 12.5 M640.5 8 L645 12.5 M640.5 8 L638 4" stroke-width="1.2"/><circle cx="643.5" cy="5" r="1.3"/>
    <path d="M654 8 V13 M654 8 L650 12.5 M654 8 L658 12.5 M654 8 L652 4" stroke-width="1.2"/><path d="M657 3.5 V7 M655.3 5.2 H658.7"/>
    <path d="M668.8 8 V13 M668.8 8 L665 12.5 M668.8 8 L672.5 12.5 M668.8 8 L668.8 3.5" stroke-width="1.2"/>
    <path d="M727.4 4 V13.5 M722.7 8.7 H732" stroke-width="1.1"/>
    <rect x="739" y="3.5" width="4" height="3.5"/><circle cx="746" cy="5.3" r="1.8"/><path d="M742.3 13 L744 9.5 L745.7 13 Z"/>
    <path d="M774 4 H782 V13 H774 Z M775.5 11.5 L780.5 5.5 M775.5 11.5 H778 M775.5 11.5 V9" stroke-width="0.8"/>
    <path d="M788.5 5 H798 M788.5 8.5 H798 M788.5 12 H798" stroke-width="1.2"/>
  </g>
  <g fill="#f2f4f8">
    <circle cx="513.5" cy="5.5" r="0.7"/><circle cx="516.5" cy="5.5" r="0.7"/><circle cx="519.5" cy="5.5" r="0.7"/>
    <circle cx="513.5" cy="8.5" r="0.7"/><circle cx="516.5" cy="8.5" r="0.7"/><circle cx="519.5" cy="8.5" r="0.7"/>
    <circle cx="513.5" cy="11.5" r="0.7"/><circle cx="516.5" cy="11.5" r="0.7"/><circle cx="519.5" cy="11.5" r="0.7"/>
    <path d="M527 7.5 H530 L528.5 9.2 Z M566 7.5 H569 L567.5 9.2 Z M588.5 7.5 H591.5 L590 9.2 Z M626 7.5 H629 L627.5 9.2 Z M689.5 7.5 H692.5 L691 9.2 Z M714.2 7.5 H717.2 L715.7 9.2 Z"/>

    <rect x="756" y="7" width="10" height="6" rx="1" fill="#d8dadf"/><rect x="758" y="4" width="6" height="3" fill="#d8dadf"/><rect x="757" y="10" width="8" height="2" fill="#e09a3a"/>
  </g>
  <circle cx="703.8" cy="8.5" r="3.2" fill="none" stroke="#f2f4f8" stroke-width="2"/>
  <circle cx="703.8" cy="8.5" r="4.6" fill="none" stroke="#f2f4f8" stroke-width="1.8" stroke-dasharray="1.6 2"/>
</svg>
<div class="a" style="left:13px;top:433px;font-size:7.5px;line-height:9px;font-weight:bold;color:#eef0f4">Model</div>
<div class="a" style="left:48px;top:433px;font-size:7.5px;line-height:9px;color:#c9ccd2">Layout1</div>
<div class="a" style="left:87px;top:433px;font-size:7.5px;line-height:9px;color:#c9ccd2">Layout2</div>
<div class="a" style="left:469px;top:436px;font-size:7.5px;line-height:9px;color:#e6e8ec;transform:scaleX(0.86);transform-origin:0 0">MODEL</div>
<div class="a" style="left:678px;top:436px;font-size:7.5px;line-height:9px;color:#e6e8ec">1:1</div>
<!-- subscribe badge -->
<div class="a" style="left:767px;top:417px;width:21.5px;height:6px;background:#b3363a"></div>
<div class="a" style="left:767px;top:417.5px;width:21.5px;text-align:center;font-size:4px;line-height:5px;color:#f0dada;letter-spacing:-0.15px">SUBSCRIBE</div>
<div class="a" style="left:767px;top:423px;width:21.5px;height:14px;background:#d04444"></div>
<svg class="a" style="left:767px;top:423px" width="22" height="14" viewBox="0 0 22 14"><path d="M7 9.5 C8 8.5 8 7 8 5.5 C8 3.5 9.2 2.3 10.75 2.3 C12.3 2.3 13.5 3.5 13.5 5.5 C13.5 7 13.5 8.5 14.5 9.5 Z" fill="#fff"/><circle cx="10.75" cy="10.6" r="1" fill="#fff"/></svg>
</body></html>
